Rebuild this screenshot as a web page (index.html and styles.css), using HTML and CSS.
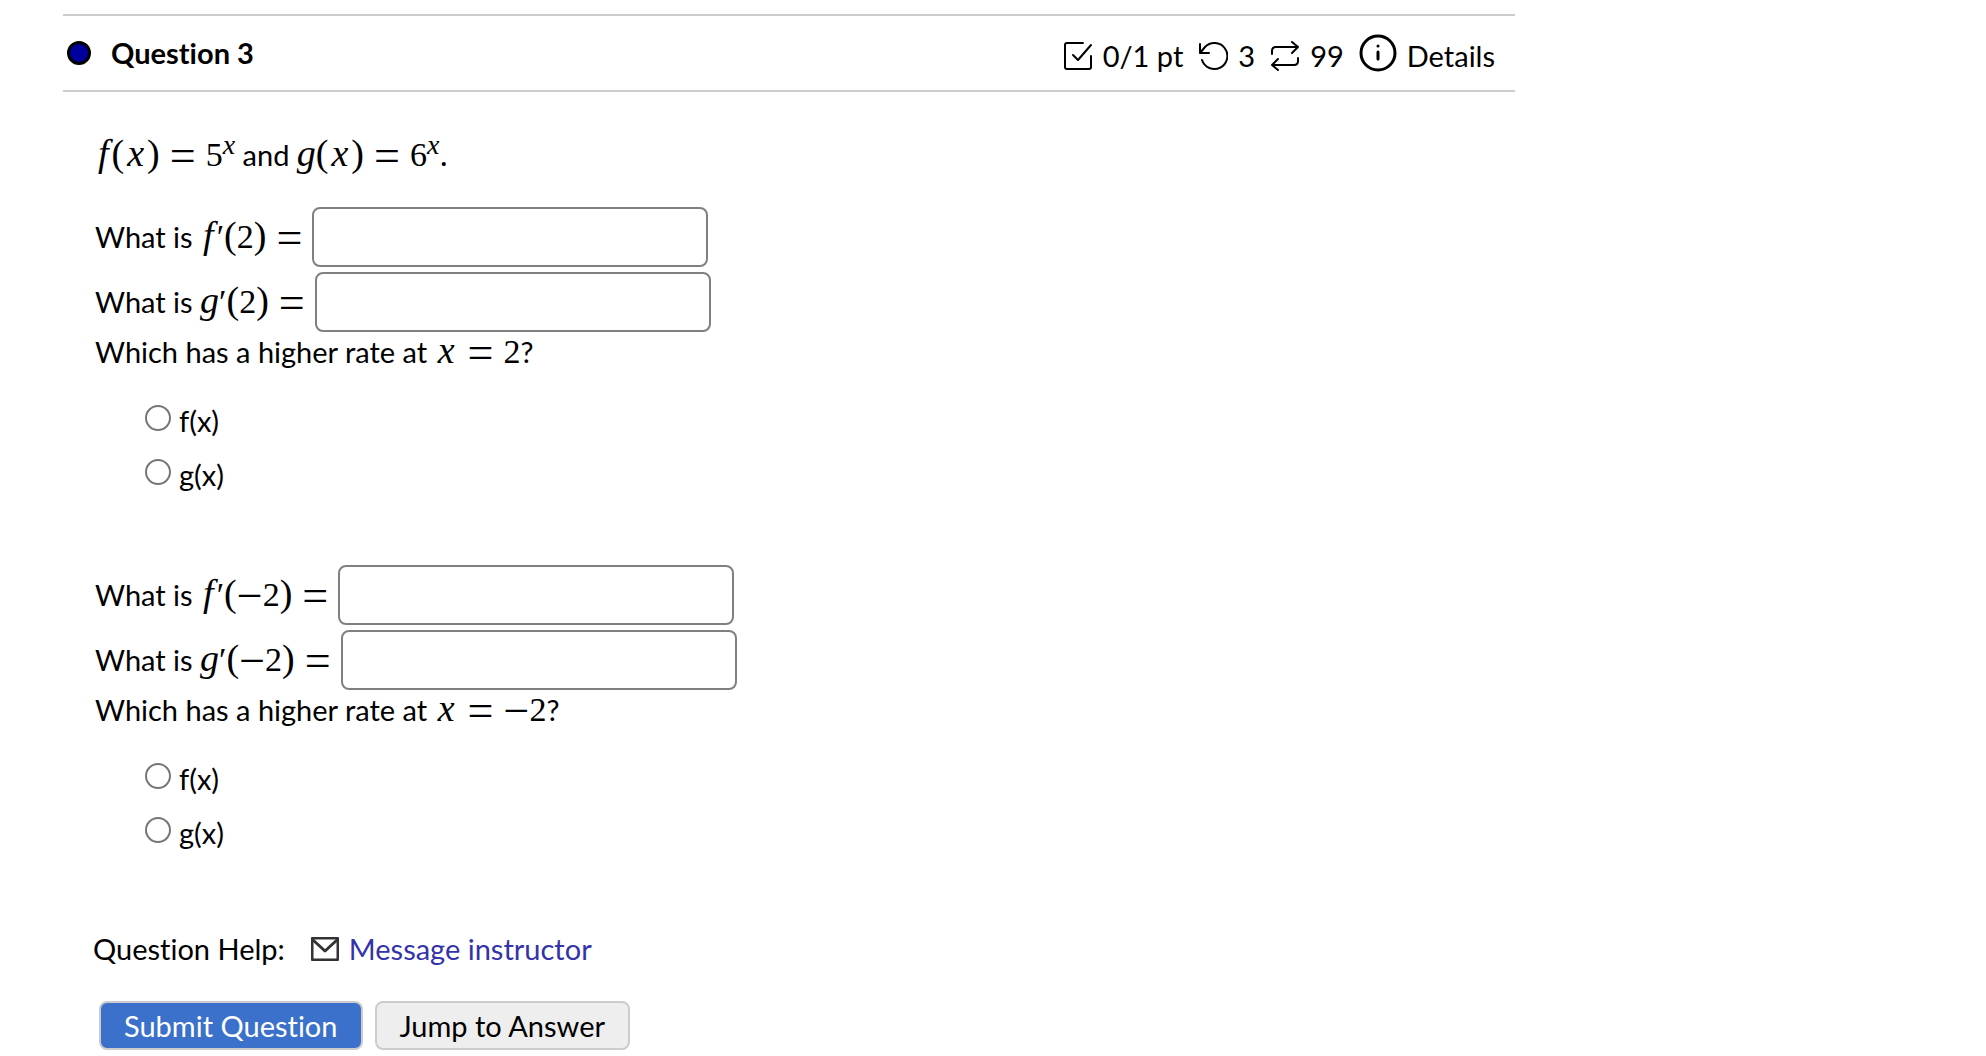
FILE: index.html
```html
<!DOCTYPE html>
<html lang="en">
<head>
    <meta charset="UTF-8" />
    <title>Question 3</title>
    <link rel="stylesheet" href="styles.css">
</head>
<body>
    <main class="question">
        <header class="question-header">
            <span class="status-dot"></span>
            <h1>Question 3</h1>
            <div class="score-info">
                <svg class="icon" viewBox="0 0 30 30" aria-hidden="true"><path d="M20 2H4Q2 2 2 4V26Q2 28 4 28H26Q28 28 28 26V15M10 14L15 19L28 4" /></svg>
                <span class="points">0/1 pt</span>
                <svg class="icon" viewBox="0 0 30 30" aria-hidden="true"><path d="M2 3V12H11M2 12L7 6A13 13 0 1 1 4 19" /></svg>
                <span class="tries">3</span>
                <svg class="icon" viewBox="0 0 30 30" aria-hidden="true"><path d="M2 13V10Q2 6 6 6H28M22 1L28 6L22 12M28 17V20Q28 24 24 24H2M8 18L2 24L8 29" /></svg>
                <span class="versions">99</span>
                <a class="details" href="#details">
                    <svg class="icon-info" viewBox="0 0 38 38" aria-hidden="true"><circle cx="19" cy="19" r="17" /><path d="M19 18V25M19 12V12" /></svg>
                    <span>Details</span>
                </a>
            </div>
        </header>

        <form class="question-form">
            <p class="intro">
                <span class="math"><i>f</i><b>(</b><i>x</i><b>)</b><span class="rel">=</span>5<sup>x</sup></span>
                and
                <span class="math"><i class="g">g</i><b>(</b><i>x</i><b>)</b><span class="rel">=</span>6<sup>x</sup>.</span>
            </p>

            <section class="part">
                <div class="answer-row">
                    <label for="f1">What is <span class="math"><i>f</i>′<b>(</b>2<b>)</b><span class="rel">=</span></span></label>
                    <input type="text" class="answer" id="f1" />
                </div>
                <div class="answer-row">
                    <label for="g1">What is <span class="math"><i class="g">g</i>′<b>(</b>2<b>)</b><span class="rel">=</span></span></label>
                    <input type="text" class="answer" id="g1" />
                </div>
                <p class="prompt">Which has a higher rate at <span class="math"><i>x</i><span class="rel">=</span>2</span>?</p>
                <div class="choices">
                    <label class="choice"><input type="radio" name="rate1" /><span>f(x)</span></label>
                    <label class="choice"><input type="radio" name="rate1" /><span>g(x)</span></label>
                </div>
            </section>

            <section class="part">
                <div class="answer-row">
                    <label for="f2">What is <span class="math"><i>f</i>′<b>(</b><span class="minus">−</span>2<b>)</b><span class="rel">=</span></span></label>
                    <input type="text" class="answer" id="f2" />
                </div>
                <div class="answer-row">
                    <label for="g2">What is <span class="math"><i class="g">g</i>′<b>(</b><span class="minus">−</span>2<b>)</b><span class="rel">=</span></span></label>
                    <input type="text" class="answer" id="g2" />
                </div>
                <p class="prompt">Which has a higher rate at <span class="math"><i>x</i><span class="rel">=</span><span class="minus">−</span>2</span>?</p>
                <div class="choices">
                    <label class="choice"><input type="radio" name="rate2" /><span>f(x)</span></label>
                    <label class="choice"><input type="radio" name="rate2" /><span>g(x)</span></label>
                </div>
            </section>

            <div class="help">
                <span>Question Help:</span>
                <a href="#message">
                    <svg class="icon-mail" viewBox="0 0 28 24" aria-hidden="true"><rect x="1" y="1" width="26" height="22" rx="2" /><path d="M2 3L14 14L26 3" /></svg>
                    <span>Message instructor</span>
                </a>
            </div>

            <div class="buttons">
                <button type="submit" class="primary">Submit Question</button>
                <button type="button">Jump to Answer</button>
            </div>
        </form>
    </main>
</body>
</html>
```
FILE: styles.css
```css
* {
    box-sizing: border-box;
}

body {
    margin: 0;
    background: #fff;
    color: #000;
    font-family: "Trebuchet MS", Lato, sans-serif;
    font-size: 29px;
    font-variant-ligatures: none;
    line-height: 36px;
}

p, h1 {
    margin: 0;
}

.question {
    max-width: 1515px;
    padding: 14px 0 0 63px;
}

.question-header {
    display: flex;
    align-items: center;
    height: 78px;
    padding: 0 20px 0 4px;
    border-top: 2px solid #ccc;
    border-bottom: 2px solid #ccc;
}

.status-dot {
    width: 24px;
    height: 24px;
    margin-right: 20px;
    border: 3px solid #000;
    border-radius: 50%;
    background: #00009f;
}

h1 {
    font-size: 29px;
    line-height: 36px;
}

.score-info {
    display: flex;
    align-items: center;
    margin-left: auto;
    padding-top: 6px;
}

.icon, .icon-info, .icon-mail {
    fill: none;
    stroke: #000;
    stroke-width: 2;
    stroke-linecap: round;
    stroke-linejoin: round;
}

.icon {
    width: 30px;
    height: 30px;
    margin-right: 10px;
}

.points, .tries, .versions {
    margin-right: 15px;
}

.details {
    display: flex;
    gap: 10px;
    color: #000;
    text-decoration: none;
}

.icon-info {
    width: 38px;
    height: 38px;
    stroke-width: 3;
    margin-top: -4px;
}

.question-form {
    padding: 45px 0 0 32px;
}

/* math text */
.math {
    font-family: "Liberation Serif", serif;
    font-size: 34px;
    line-height: 36px;
}

.math i, .math b {
    font-size: 38px;
    font-weight: normal;
    line-height: 0;
}

.math i {
    margin: 0 3px;
}

.math .g {
    margin: 0;
}

.math sup {
    font-size: 28px;
    font-style: italic;
    line-height: 0;
}

.rel, .minus {
    font-size: 46px;
    line-height: 0;
    vertical-align: -5px;
}

.rel {
    margin: 0 10px;
}

.intro {
    margin-bottom: 34px;
}

.answer-row {
    display: flex;
    align-items: center;
    height: 60px;
    margin-bottom: 5px;
}

.answer {
    width: 396px;
    height: 60px;
    padding: 4px 12px;
    border: 2px solid #808080;
    border-radius: 8px;
    background: #fff;
    font: inherit;
}

.prompt {
    margin-top: -3px;
}

.choices {
    padding: 33px 0 0 50px;
}

.part {
    height: 358px;
}

.choice {
    display: flex;
    gap: 8px;
    height: 54px;
}

.choice input {
    appearance: none;
    width: 26px;
    height: 26px;
    margin: 2px 0 0;
    border: 2px solid #767676;
    border-radius: 50%;
    background: #fff;
}

.choice input:checked {
    background: #3b71ca;
    box-shadow: inset 0 0 0 4px #fff;
}

.help {
    display: flex;
    gap: 26px;
    margin: 8px 0 34px -2px;
}

.help a {
    display: flex;
    align-items: center;
    gap: 10px;
    color: #3333aa;
    text-decoration: none;
}

.icon-mail {
    width: 28px;
    height: 24px;
    stroke: #333;
    stroke-width: 3;
}

.buttons {
    display: flex;
    gap: 12px;
    padding-left: 4px;
}

button {
    height: 49px;
    padding: 0 23px;
    border: 2px solid #ccc;
    border-radius: 8px;
    background: #eee;
    color: #000;
    font: inherit;
    cursor: pointer;
}

button.primary {
    background: #3b71ca;
    color: #fff;
}
```
